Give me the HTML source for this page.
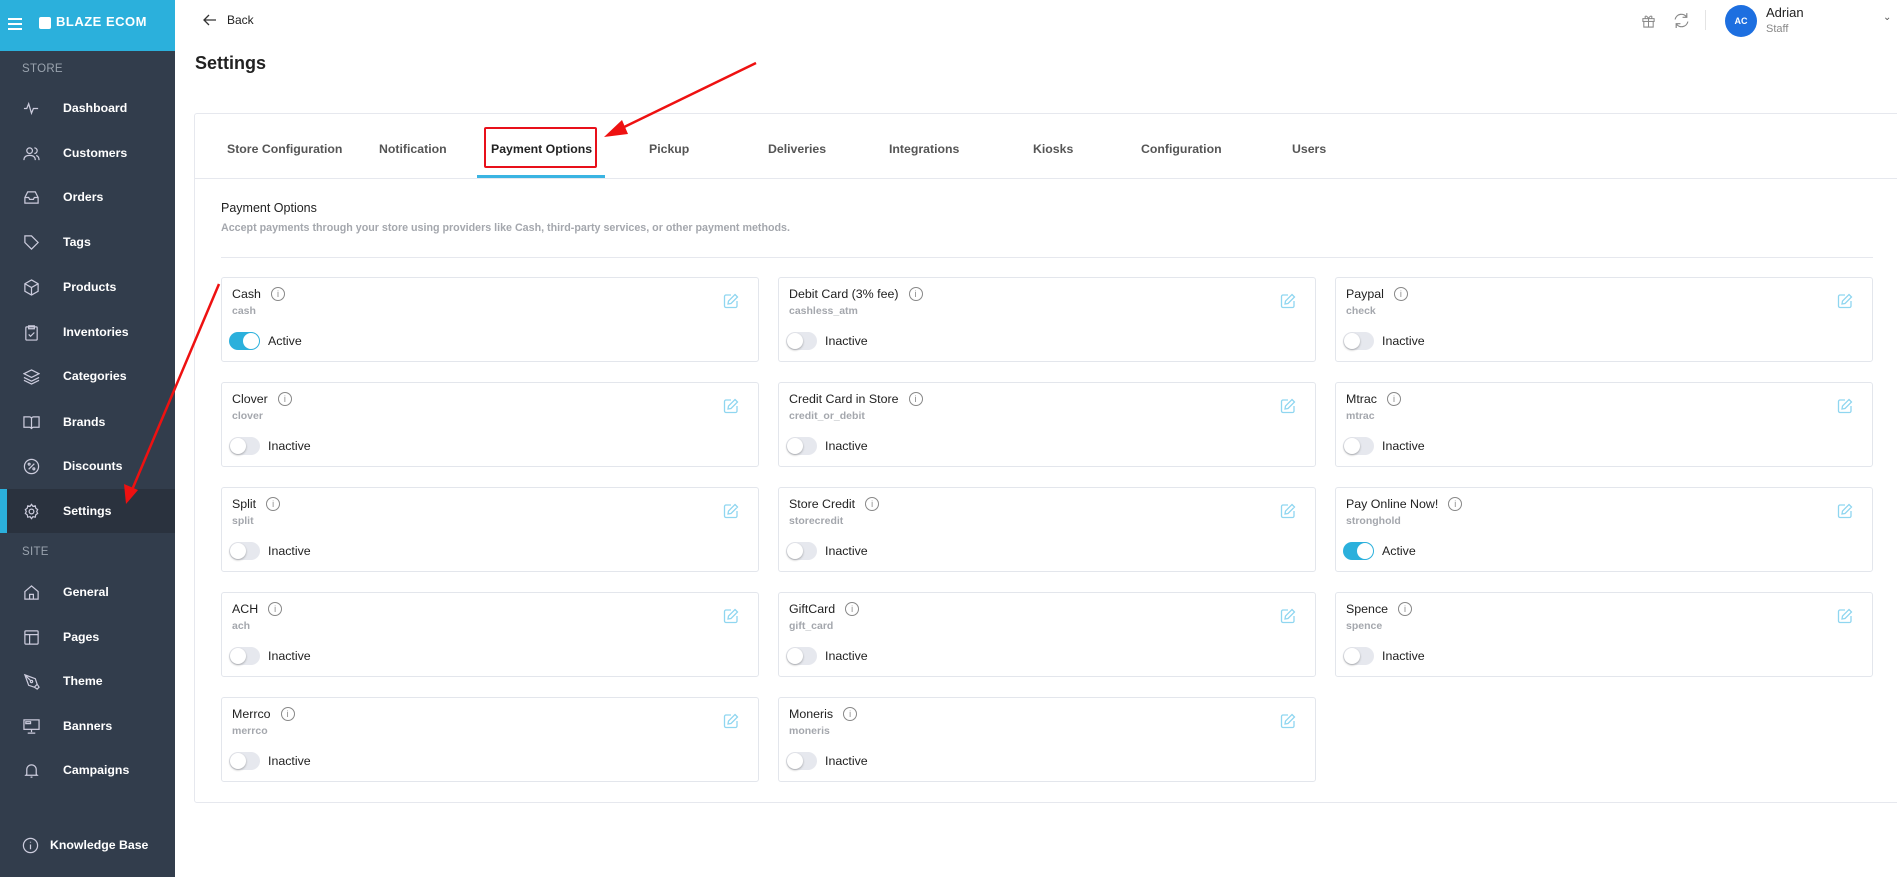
<!DOCTYPE html>
<html><head><meta charset="utf-8">
<style>
*{box-sizing:border-box;margin:0;padding:0}
body{width:1897px;height:877px;overflow:hidden;background:#fff;font-family:"Liberation Sans",Arial,sans-serif;position:relative;color:#222}
.sb{position:absolute;left:0;top:0;width:175px;height:877px;background:#323d4c}
.top{position:absolute;left:0;top:0;width:175px;height:51px;background:#2bb0dc}
.sec{position:absolute;left:22px;font-size:11.5px;color:#9aa3ae;letter-spacing:.3px}
.it{position:absolute;left:0;width:175px;height:44px;display:flex;align-items:center;color:#fff;font-size:12.3px;font-weight:bold}
.it svg{position:absolute;left:23px;width:17px;height:17px}
.it span{position:absolute;left:63px}
.act{background:#2a323e}
.act:before{content:"";position:absolute;left:0;top:0;width:7px;height:44px;background:#2bb0dc}
.abs{position:absolute}
.cont{position:absolute;left:194px;top:113px;width:1720px;height:690px;border:1px solid #e6e8ee;border-radius:3px}
.tab{position:absolute;top:142px;font-size:12.3px;font-weight:bold;color:#555}
.card{position:absolute;width:538px;height:85px;border:1px solid #e3e6ec;border-radius:3px}
.card .t{position:absolute;left:10px;top:9px;font-size:12.4px;color:#222;display:flex;align-items:center}
.card .t i{display:inline-block;width:14px;height:14px;border:1px solid #888;border-radius:50%;margin-left:10px;font-style:normal;font-size:9px;color:#888;text-align:center;line-height:12px}
.card .c{position:absolute;left:10px;top:27px;font-size:10.5px;font-weight:bold;color:#a4a7ad}
.card .tg{position:absolute;left:7px;top:54px;width:31px;height:18px;border-radius:9px;background:#e6e8ee}
.card .tg:after{content:"";position:absolute;left:1px;top:1px;width:16px;height:16px;border-radius:50%;background:#fff;box-shadow:0 1px 2px rgba(0,0,0,.3)}
.card .tg.on{background:#2bb0dc}
.card .tg.on:after{left:14px;box-shadow:none}
.card .s{position:absolute;left:46px;top:56px;font-size:12.4px;color:#222}
.card svg.e{position:absolute;right:19px;top:15px}
</style></head><body>
<div class="sb">
 <div class="top">
  <div class="abs" style="left:8px;top:18px;width:14px;height:2px;background:#fff;box-shadow:0 5px 0 #fff,0 10px 0 #fff"></div>
  <div class="abs" style="left:39px;top:17px;width:12px;height:12px;background:#fff;border-radius:2px"></div>
  <div class="abs" style="left:56px;top:14px;color:#fff;font-weight:bold;font-size:13px;letter-spacing:.5px">BLAZE ECOM</div>
 </div>
 <div class="sec" style="top:63px">STORE</div>
 <div class="it" style="top:86px"><svg viewBox="0 0 18 18" fill="none" stroke="#ccd" stroke-width="1.3"><path d="M1 9h3l2-5 3 10 2-5h5"/></svg><span>Dashboard</span></div>
 <div class="it" style="top:131px"><svg viewBox="0 0 18 18" fill="none" stroke="#ccd" stroke-width="1.3"><circle cx="7" cy="6" r="3"/><path d="M1 16c0-4 3-5 6-5s6 1 6 5M12 3a3 3 0 010 6M14 11c2 1 3 2 3 5"/></svg><span>Customers</span></div>
 <div class="it" style="top:175px"><svg viewBox="0 0 18 18" fill="none" stroke="#ccd" stroke-width="1.3"><path d="M2 9l3-6h8l3 6v6H2zM2 9h4l1 2h4l1-2h4"/></svg><span>Orders</span></div>
 <div class="it" style="top:220px"><svg viewBox="0 0 18 18" fill="none" stroke="#ccd" stroke-width="1.3"><path d="M2 2h7l7 7-7 7-7-7z"/></svg><span>Tags</span></div>
 <div class="it" style="top:265px"><svg viewBox="0 0 18 18" fill="none" stroke="#ccd" stroke-width="1.3"><path d="M9 1l7 4v8l-7 4-7-4V5zM2 5l7 4 7-4M9 9v8"/></svg><span>Products</span></div>
 <div class="it" style="top:310px"><svg viewBox="0 0 18 18" fill="none" stroke="#ccd" stroke-width="1.3"><rect x="3" y="3" width="12" height="14" rx="1"/><path d="M6 2h6v3H6zM6 11l2 2 4-4"/></svg><span>Inventories</span></div>
 <div class="it" style="top:354px"><svg viewBox="0 0 18 18" fill="none" stroke="#ccd" stroke-width="1.3"><path d="M9 2l8 4-8 4-8-4zM1 10l8 4 8-4M1 13l8 4 8-4"/></svg><span>Categories</span></div>
 <div class="it" style="top:400px"><svg viewBox="0 0 18 18" fill="none" stroke="#ccd" stroke-width="1.3"><path d="M1 3h6c1 0 2 1 2 2v11c0-1-1-2-2-2H1zM17 3h-6c-1 0-2 1-2 2v11c0-1 1-2 2-2h6z"/></svg><span>Brands</span></div>
 <div class="it" style="top:444px"><svg viewBox="0 0 18 18" fill="none" stroke="#ccd" stroke-width="1.3"><circle cx="9" cy="9" r="7.5"/><path d="M6 12l6-6"/><circle cx="6.5" cy="6.5" r="1"/><circle cx="11.5" cy="11.5" r="1"/></svg><span>Discounts</span></div>
 <div class="it act" style="top:489px"><svg viewBox="0 0 18 18" fill="none" stroke="#ccd" stroke-width="1.3"><circle cx="9" cy="9" r="2.5"/><path d="M9 1.5l1.5 2 2.5-.5.5 2.5 2 1.5-1 2 1 2-2 1.5-.5 2.5-2.5-.5L9 16.5l-1.5-2-2.5.5-.5-2.5-2-1.5 1-2-1-2 2-1.5.5-2.5 2.5.5z"/></svg><span>Settings</span></div>
 <div class="sec" style="top:546px">SITE</div>
 <div class="it" style="top:570px"><svg viewBox="0 0 18 18" fill="none" stroke="#ccd" stroke-width="1.3"><path d="M2 8l7-6 7 6v8H2zM7 16v-5h4v5"/></svg><span>General</span></div>
 <div class="it" style="top:615px"><svg viewBox="0 0 18 18" fill="none" stroke="#ccd" stroke-width="1.3"><rect x="2" y="2" width="14" height="14" rx="1"/><path d="M2 6h14M7 6v10"/></svg><span>Pages</span></div>
 <div class="it" style="top:659px"><svg viewBox="0 0 18 18" fill="none" stroke="#ccd" stroke-width="1.3"><path d="M2 2l11 4 2 6-3 3-6-2zM2 2l6 6M12 15l3 2 2-2-2-3"/><circle cx="9" cy="9" r="1.2"/></svg><span>Theme</span></div>
 <div class="it" style="top:704px"><svg viewBox="0 0 18 18" fill="none" stroke="#ccd" stroke-width="1.3"><rect x="1" y="2" width="16" height="10"/><path d="M3 4h5v2H3zM9 12v3M5 16h8"/></svg><span>Banners</span></div>
 <div class="it" style="top:748px"><svg viewBox="0 0 18 18" fill="none" stroke="#ccd" stroke-width="1.3"><path d="M4 13V8a5 5 0 0110 0v5l1 1H3zM8 16h2"/></svg><span>Campaigns</span></div>
 <div class="it" style="top:823px"><svg viewBox="0 0 18 18" fill="none" stroke="#ccd" stroke-width="1.3" style="left:22px"><circle cx="9" cy="9" r="7.5"/><path d="M9 8v5M9 5v1"/></svg><span style="left:50px">Knowledge Base</span></div>
</div>

<svg class="abs" style="left:203px;top:13px" width="14" height="14" viewBox="0 0 14 14" fill="none" stroke="#333" stroke-width="1.3"><path d="M13 7H1M6 2L1 7l5 5"/></svg>
<div class="abs" style="left:227px;top:13px;font-size:12px;color:#222">Back</div>
<div class="abs" style="left:195px;top:53px;font-size:18px;font-weight:bold;color:#222">Settings</div>

<svg class="abs" style="left:1641px;top:13px" width="15" height="15" viewBox="0 0 16 16" fill="none" stroke="#888" stroke-width="1.1"><rect x="2" y="6" width="12" height="3"/><path d="M3 9v6h10V9M8 6v9M8 6C6 2 3 3 5 6M8 6c2-4 5-3 3 0"/></svg>
<svg class="abs" style="left:1673px;top:12px" width="17" height="17" viewBox="0 0 16 16" fill="none" stroke="#888" stroke-width="1.1"><path d="M2 7a6 6 0 0111-2M14 9a6 6 0 01-11 2M13 1v4H9M3 15v-4h4"/></svg>
<div class="abs" style="left:1705px;top:10px;width:1px;height:20px;background:#e4e4e4"></div>
<div class="abs" style="left:1725px;top:5px;width:32px;height:32px;border-radius:50%;background:#1d6fe0;color:#fff;font-size:9px;font-weight:bold;text-align:center;line-height:32px">AC</div>
<div class="abs" style="left:1766px;top:5px;font-size:13px;color:#222">Adrian</div>
<div class="abs" style="left:1766px;top:23px;font-size:11px;color:#888">Staff</div>
<div class="abs" style="left:1883px;top:12px;font-size:10px;color:#555">&#8964;</div>

<div class="cont"></div>
<div class="abs" style="left:194px;top:178px;width:1703px;height:1px;background:#e6e8ee"></div>
<div class="tab" style="left:227px">Store Configuration</div>
<div class="tab" style="left:379px">Notification</div>
<div class="tab" style="left:491px;color:#222">Payment Options</div>
<div class="tab" style="left:649px">Pickup</div>
<div class="tab" style="left:768px">Deliveries</div>
<div class="tab" style="left:889px">Integrations</div>
<div class="tab" style="left:1033px">Kiosks</div>
<div class="tab" style="left:1141px">Configuration</div>
<div class="tab" style="left:1292px">Users</div>
<div class="abs" style="left:477px;top:175px;width:128px;height:3px;background:#3ab4e2"></div>
<div class="abs" style="left:484px;top:127px;width:113px;height:41px;border:2px solid #e8101a;border-radius:2px"></div>

<div class="abs" style="left:221px;top:201px;font-size:12.5px;color:#222">Payment Options</div>
<div class="abs" style="left:221px;top:222px;font-size:10.7px;font-weight:bold;color:#a4a7ad">Accept payments through your store using providers like Cash, third-party services, or other payment methods.</div>
<div class="abs" style="left:221px;top:257px;width:1652px;height:1px;background:#e6e8ee"></div>

<svg width="0" height="0" style="position:absolute"><defs><symbol id="ed" viewBox="0 0 16 16"><path d="M8 2H3a1.5 1.5 0 00-1.5 1.5v9.5A1.5 1.5 0 003 14.5h9.5a1.5 1.5 0 001.5-1.5V8M12 1.5l2.5 2.5-6.5 6.5-3 .5.5-3z" fill="none" stroke="#8fd6f0" stroke-width="1.3"/></symbol></defs></svg>

<div class="card" style="left:221px;top:277px"><div class="t">Cash<i>i</i></div><div class="c">cash</div><div class="tg on"></div><div class="s">Active</div><svg class="e" width="16" height="16"><use href="#ed"/></svg></div>
<div class="card" style="left:778px;top:277px"><div class="t">Debit Card (3% fee)<i>i</i></div><div class="c">cashless_atm</div><div class="tg"></div><div class="s">Inactive</div><svg class="e" width="16" height="16"><use href="#ed"/></svg></div>
<div class="card" style="left:1335px;top:277px"><div class="t">Paypal<i>i</i></div><div class="c">check</div><div class="tg"></div><div class="s">Inactive</div><svg class="e" width="16" height="16"><use href="#ed"/></svg></div>

<div class="card" style="left:221px;top:382px"><div class="t">Clover<i>i</i></div><div class="c">clover</div><div class="tg"></div><div class="s">Inactive</div><svg class="e" width="16" height="16"><use href="#ed"/></svg></div>
<div class="card" style="left:778px;top:382px"><div class="t">Credit Card in Store<i>i</i></div><div class="c">credit_or_debit</div><div class="tg"></div><div class="s">Inactive</div><svg class="e" width="16" height="16"><use href="#ed"/></svg></div>
<div class="card" style="left:1335px;top:382px"><div class="t">Mtrac<i>i</i></div><div class="c">mtrac</div><div class="tg"></div><div class="s">Inactive</div><svg class="e" width="16" height="16"><use href="#ed"/></svg></div>

<div class="card" style="left:221px;top:487px"><div class="t">Split<i>i</i></div><div class="c">split</div><div class="tg"></div><div class="s">Inactive</div><svg class="e" width="16" height="16"><use href="#ed"/></svg></div>
<div class="card" style="left:778px;top:487px"><div class="t">Store Credit<i>i</i></div><div class="c">storecredit</div><div class="tg"></div><div class="s">Inactive</div><svg class="e" width="16" height="16"><use href="#ed"/></svg></div>
<div class="card" style="left:1335px;top:487px"><div class="t">Pay Online Now!<i>i</i></div><div class="c">stronghold</div><div class="tg on"></div><div class="s">Active</div><svg class="e" width="16" height="16"><use href="#ed"/></svg></div>

<div class="card" style="left:221px;top:592px"><div class="t">ACH<i>i</i></div><div class="c">ach</div><div class="tg"></div><div class="s">Inactive</div><svg class="e" width="16" height="16"><use href="#ed"/></svg></div>
<div class="card" style="left:778px;top:592px"><div class="t">GiftCard<i>i</i></div><div class="c">gift_card</div><div class="tg"></div><div class="s">Inactive</div><svg class="e" width="16" height="16"><use href="#ed"/></svg></div>
<div class="card" style="left:1335px;top:592px"><div class="t">Spence<i>i</i></div><div class="c">spence</div><div class="tg"></div><div class="s">Inactive</div><svg class="e" width="16" height="16"><use href="#ed"/></svg></div>

<div class="card" style="left:221px;top:697px"><div class="t">Merrco<i>i</i></div><div class="c">merrco</div><div class="tg"></div><div class="s">Inactive</div><svg class="e" width="16" height="16"><use href="#ed"/></svg></div>
<div class="card" style="left:778px;top:697px"><div class="t">Moneris<i>i</i></div><div class="c">moneris</div><div class="tg"></div><div class="s">Inactive</div><svg class="e" width="16" height="16"><use href="#ed"/></svg></div>

<svg class="abs" style="left:0;top:0" width="1897" height="877">
<line x1="756" y1="63" x2="618" y2="130" stroke="#ee1111" stroke-width="2.5"/>
<polygon points="604,137 622,120 628,134" fill="#ee1111"/>
<line x1="219" y1="284" x2="132" y2="490" stroke="#ee1111" stroke-width="2.5"/>
<polygon points="126,504 124,484 138,490" fill="#ee1111"/>
</svg>
</body></html>
